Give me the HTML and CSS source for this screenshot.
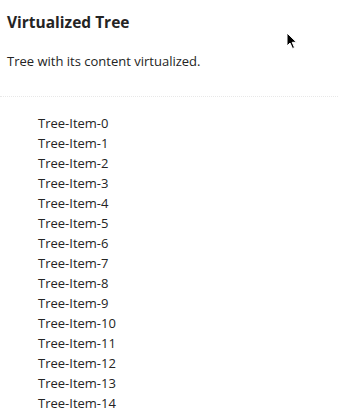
FILE: index.html
```html
<!DOCTYPE html>
<html>
<head>
<meta charset="utf-8">
<link rel="stylesheet" href="styles.css">
</head>
<body>
<div class="page">
  <header class="intro">
    <h1 class="title">Virtualized Tree</h1>
    <p class="desc">Tree with its content virtualized.</p>
  </header>
  <div class="sep"></div>
  <ul class="tree">
    <li class="item">Tree-Item-0</li>
    <li class="item">Tree-Item-1</li>
    <li class="item">Tree-Item-2</li>
    <li class="item">Tree-Item-3</li>
    <li class="item">Tree-Item-4</li>
    <li class="item">Tree-Item-5</li>
    <li class="item">Tree-Item-6</li>
    <li class="item">Tree-Item-7</li>
    <li class="item">Tree-Item-8</li>
    <li class="item">Tree-Item-9</li>
    <li class="item">Tree-Item-10</li>
    <li class="item">Tree-Item-11</li>
    <li class="item">Tree-Item-12</li>
    <li class="item">Tree-Item-13</li>
    <li class="item">Tree-Item-14</li>
  </ul>
  <svg class="cursor" width="12" height="18" viewBox="0 0 12 18"><path d="M1 1 L1 14 L4 11 L6.5 16.5 L8.5 15.6 L6.2 10.3 L10.5 10.3 Z" fill="#000" stroke="#fff" stroke-width="1"/></svg>
</div>
</body>
</html>
```
FILE: styles.css
```css
html, body {
  margin: 0;
  padding: 0;
  background: #fff;
}
body {
  font-family: "Open Sans", "Noto Sans", sans-serif;
  color: #242424;
  overflow: hidden;
  height: 418px;
}
.page {
  position: relative;
}
.intro {
  padding: 11px 7px 0;
}
.title {
  margin: 0;
  font-size: 15.5px;
  font-weight: 700;
  line-height: 22px;
}
.desc {
  margin: 19px 0 0;
  font-size: 13px;
  line-height: 18px;
}
.sep {
  margin-top: 26px;
  border-top: 1px dotted #e8e8e8;
}
.tree {
  list-style: none;
  margin: 16px 0 0;
  padding: 0 0 0 38px;
}
.item {
  font-size: 13px;
  line-height: 20px;
  height: 20px;
}
.cursor {
  position: absolute;
  left: 286px;
  top: 32px;
}
```
